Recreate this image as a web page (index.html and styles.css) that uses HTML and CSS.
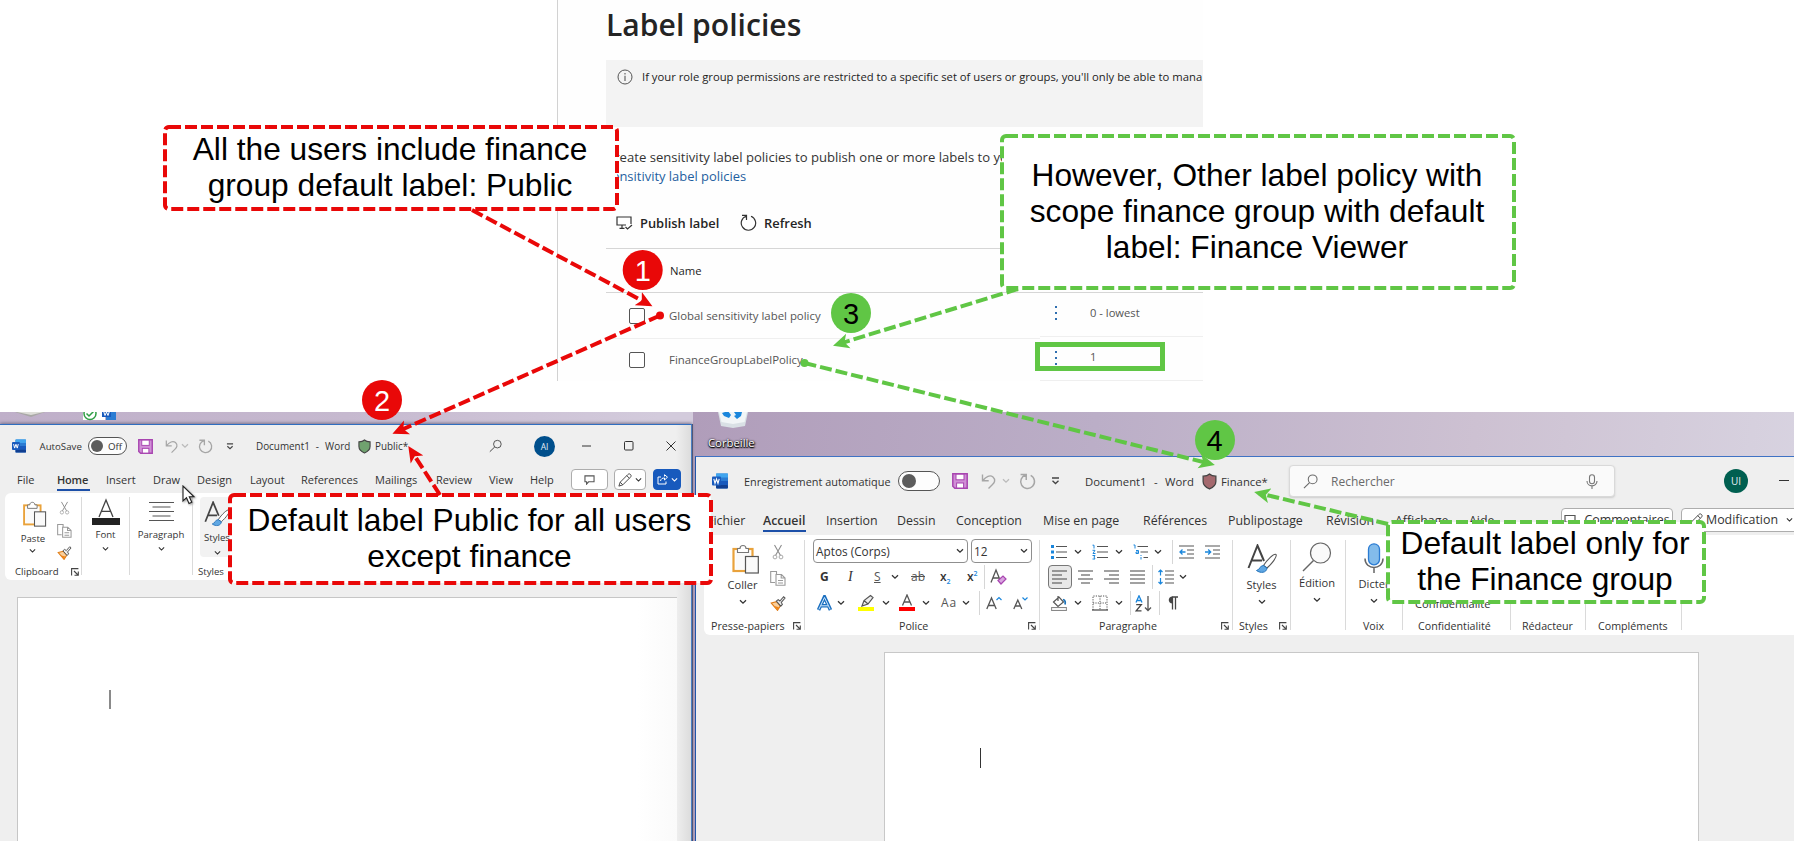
FILE: index.html
```html
<!DOCTYPE html>
<html lang="en">
<head>
<meta charset="utf-8">
<title>Label policies</title>
<link rel="stylesheet" href="styles.css">
</head>
<body>
<svg class="sprite" aria-hidden="true">
  <symbol id="chev" viewBox="0 0 8 6"><path d="M1 1.2 4 4.2 7 1.2" fill="none" stroke="currentColor" stroke-width="1.3"/></symbol>
  <symbol id="word" viewBox="0 0 16 16"><rect x="4" y="0.5" width="12" height="15" rx="1" fill="#2b7cd3"/><rect x="4" y="0.5" width="12" height="4" fill="#41a5ee"/><rect x="4" y="8" width="12" height="4" fill="#185abd"/><rect x="4" y="12" width="12" height="3.5" rx="1" fill="#103f91"/><rect x="0" y="3.5" width="9" height="9" rx="1" fill="#185abd"/><path d="M1.8 5.8 3 10.4 4.5 6 6 10.4 7.2 5.8" fill="none" stroke="#fff" stroke-width="1.1"/></symbol>
  <symbol id="save" viewBox="0 0 16 16"><path d="M.8.8h14.4v14.4H2.8L.8 13.2z" fill="#d08fd6" stroke="#a845b0" stroke-width="1.5"/><rect x="4" y="1.2" width="8" height="5.6" fill="#fff" stroke="#a845b0"/><rect x="4.6" y="10" width="7" height="5" fill="#fff" stroke="#a845b0"/></symbol>
  <symbol id="undo" viewBox="0 0 16 16"><path d="M1.5 1v6.2h6.2M1.8 7C5 3 9 1 12 3.5c3 2.8 1.500 5.500-.5 7.500L7.500 15" fill="none" stroke="#a6a6a6" stroke-width="1.4"/></symbol>
  <symbol id="redo" viewBox="0 0 16 16"><path d="M1.500 1.300H6.800V6.600M6.500 1.800A6.500 6.500 0 1 0 11 2.300" fill="none" stroke="#a6a6a6" stroke-width="1.4"/></symbol>
  <symbol id="more" viewBox="0 0 9 8"><path d="M1 1h7M1.500 3.700 4.500 6.500 7.500 3.700" fill="none" stroke="#444" stroke-width="1.300"/></symbol>
  <symbol id="shield" viewBox="0 0 14 16"><path d="M7 1C5.500 2.500 3.500 3 1 3v5c0 3.500 2.500 5.500 6 7 3.500-1.500 6-3.500 6-7V3C10.500 3 8.500 2.500 7 1z" fill="currentColor" stroke="#444" stroke-width="1.200"/></symbol>
  <symbol id="search" viewBox="0 0 16 16"><circle cx="10.300" cy="5.700" r="4.700" fill="none" stroke="currentColor" stroke-width="1.100"/><path d="M7 9.200 1 15" stroke="currentColor" stroke-width="1.200"/></symbol>
  <symbol id="scissors" viewBox="0 0 12 16"><path d="M2.500 1 8.500 11.500M9.500 1 3.500 11.500" stroke="#8c8c8c" stroke-width="1.100"/><circle cx="3" cy="13" r="1.900" fill="none" stroke="#aaa"/><circle cx="9" cy="13" r="1.900" fill="none" stroke="#aaa"/></symbol>
  <symbol id="copy" viewBox="0 0 16 16"><path d="M5 12.500H.7V1.500H6.500V4M6 4.500h5.500l3.500 3.500v7.300H6zM11.200 4.800V8H15M8 10.500h5M8 13h5" fill="none" stroke="#9a9a9a" stroke-width="1.100"/></symbol>
  <symbol id="brush" viewBox="0 0 16 16"><path d="M.8 7.500 6.500 6l4 4.500L7.500 15.300z" fill="#f9cf9c" stroke="#e07b13" stroke-width="1.200"/><path d="M3 10.500 7.500 14.800 9 12z" fill="#f0861b"/><path d="M6.200 5.500 8.200 3.800 10 5.300 14 .8 15.500 2.200 11.500 6.800 12.700 9 11 10.800z" fill="#eee" stroke="#555" stroke-width="1.100"/></symbol>
  <symbol id="launch" viewBox="0 0 8 8"><path d="M.6 7.500V.6H7.400M3 3 7 7M7.300 3.500V7.300H3.500" fill="none" stroke="#444" stroke-width="1.100"/></symbol>
  <symbol id="paste" viewBox="0 0 27 30"><rect x="1.500" y="5" width="19" height="22" fill="none" stroke="#e9a23b" stroke-width="2.200"/><rect x="3.700" y="7" width="14.600" height="18" fill="#fafafa"/><path d="M5.500 8.500V4.500H8C8 .500 14 .500 14 4.500h2.500v4z" fill="#fff" stroke="#777" stroke-width="1.100"/><rect x="13.500" y="12.500" width="12.800" height="16.500" fill="#fafafa" stroke="#555" stroke-width="1.200"/></symbol>
  <symbol id="stylesico" viewBox="0 0 30 30"><path d="M1.500 24 10.500 1.500 17 17M4.500 16.500H15" fill="none" stroke="#444" stroke-width="2"/><path d="M29 10.500C27 9 20 16 16.500 21.500l3.500 2.500C25 19.500 30.500 12.500 29 10.500z" fill="#fff" stroke="#555" stroke-width="1.100"/><path d="M16.500 21.500c-4 0-3 4-7 5 4 3 10 2.500 10.500-2.500z" fill="#5fa7e3" stroke="#2372ba"/></symbol>
  <symbol id="mic" viewBox="0 0 20 30"><rect x="4.500" y=".8" width="11" height="21" rx="5.500" fill="#83bceb" stroke="#2b7cd3" stroke-width="1.300"/><path d="M1 15.500c0 12 18 12 18 0M10 25v5" fill="none" stroke="#666" stroke-width="1.500"/></symbol>
  <symbol id="bucket" viewBox="0 0 16 16"><path d="M2.500 7 8 2l4.500 5L7 11.500zM7 1v5" fill="none" stroke="#555" stroke-width="1.200"/><path d="M12 4.500c2.500.5 2.500 3 2 5" fill="none" stroke="#1b72b8" stroke-width="1.700"/><rect x=".6" y="12.500" width="14.800" height="3" fill="#f5f5f5" stroke="#888"/></symbol>
  <symbol id="pen" viewBox="0 0 16 16"><path d="M1 15 2.500 10.500 11 2c1-1 2-1.500 3.300-.3C15.500 3 15 4 14 5L5.500 13.500zM10 3l3 3M2.500 10.500l3 3" fill="none" stroke="#444" stroke-width="1.100"/></symbol>
  <symbol id="comment" viewBox="0 0 12 11"><path d="M1 1h10v6.500H5L2.800 10V7.500H1z" fill="none" stroke="#555" stroke-width="1.200"/></symbol>
</svg>

<main class="canvas">

  <section class="admin">
    <h1>Label policies</h1>
    <div class="notice">
      <svg width="16" height="16" viewBox="0 0 16 16"><circle cx="8" cy="8" r="7" fill="none" stroke="#555"/><path d="M8 6.800V12M8 4v1.500" stroke="#555" stroke-width="1.100"/></svg>
      <span>If your role group permissions are restricted to a specific set of users or groups, you'll only be able to mana</span>
    </div>
    <p class="intro">Create sensitivity label policies to publish one or more labels to your<br><a>sensitivity label policies</a></p>
    <div class="commands">
      <svg width="17" height="14" viewBox="0 0 17 14"><path d="M10 9H1V1h14v7M6 9v3M3.500 12.300H8.500M9.500 11l2 2 4.500-4" fill="none" stroke="#333" stroke-width="1.200"/></svg>
      <span>Publish label</span>
      <svg width="18" height="18" viewBox="0 0 18 18"><path d="M3 1.300H7.500V6M7.200 2.200A7.200 7.200 0 1 0 12 2.300" fill="none" stroke="#333" stroke-width="1.200"/></svg>
      <span>Refresh</span>
    </div>
    <div class="thead"><span>Name</span></div>
    <div class="tbody">
      <div class="names">
        <div class="row"><i class="check"></i><span>Global sensitivity label policy</span></div>
        <div class="row last"><i class="check"></i><span>FinanceGroupLabelPolicy</span></div>
      </div>
      <div class="order">
        <div class="row"><i class="dots"></i><span>0 - lowest</span></div>
        <div class="row"><i class="dots"></i><span>1</span></div>
      </div>
    </div>
  </section>

  <div class="desk desk-left">
    <svg width="130" height="12" viewBox="0 0 130 12"><path d="M15 0 31 5 45 0z" fill="#a9a8a6"/><path d="M17 0H44L31 3z" fill="#deded9"/><rect x="83" y="0" width="22" height="8" fill="#fff"/><circle cx="90" cy="1.500" r="6" fill="#fff" stroke="#2f9e44" stroke-width="1.500"/><path d="M86.500 1.500 89 4 93.500-.5" fill="none" stroke="#2f9e44" stroke-width="1.500"/><rect x="106" y="0" width="10" height="8" fill="#2b7cd3"/><rect x="102" y="0" width="9" height="5" fill="#185abd"/><path d="M103.500-1 105 3.500 106.500 0 108 3.500 109.500-1" fill="none" stroke="#fff"/></svg>
  </div>
  <div class="desk desk-right">
    <svg width="32" height="16" viewBox="0 0 32 16"><path d="M1 0H31L28 14 16 16 4 14z" fill="#d9e0e5"/><path d="M2 0H30L27.500 10 16 12 4.500 10z" fill="#f1f5f7"/><path d="M5 1 11-1l3 4-2 3-5-2zM17 0h8l-1 4-4 3-3-3 2-1z" fill="#1a86dc"/></svg>
    <span>Corbeille</span>
  </div>

  <section class="win win1">
    <header class="title">
      <svg width="14" height="14"><use href="#word"/></svg>
      <span>AutoSave</span>
      <span class="toggle"><i></i>Off</span>
      <svg width="15" height="15"><use href="#save"/></svg>
      <svg width="14" height="15"><use href="#undo"/></svg>
      <svg class="dim" width="8" height="6"><use href="#chev"/></svg>
      <svg width="15" height="15"><use href="#redo"/></svg>
      <svg width="8" height="7"><use href="#more"/></svg>
      <span class="doc">Document1 - Word</span>
      <svg class="green" width="13" height="15"><use href="#shield"/></svg>
      <span class="tag">Public*</span>
      <svg class="ink" width="13" height="14"><use href="#search"/></svg>
      <b class="avatar">AI</b>
      <svg width="10" height="10" viewBox="0 0 10 10"><path d="M0 5h9" stroke="#333"/></svg>
      <svg width="10" height="10" viewBox="0 0 10 10"><rect x=".5" y=".5" width="8.500" height="8.500" rx="1" fill="none" stroke="#333"/></svg>
      <svg width="10" height="10" viewBox="0 0 10 10"><path d="M.5.5l9 9M9.500.5l-9 9" stroke="#333"/></svg>
    </header>
    <nav class="tabs">
      <span>File</span><span class="on">Home</span><span>Insert</span><span>Draw</span><span>Design</span><span>Layout</span><span>References</span><span>Mailings</span><span>Review</span><span>View</span><span>Help</span>
      <span class="btn"><svg width="11" height="10"><use href="#comment"/></svg></span>
      <span class="btn"><svg width="14" height="14"><use href="#pen"/></svg><svg width="7" height="6"><use href="#chev"/></svg></span>
      <span class="btn share"><svg width="11" height="11" viewBox="0 0 11 11"><path d="M4 3H1v7h8V7.500M3.500 7C4 4.500 5.500 4 7.500 4V6L10.500 3.200 7.500.7V2.500" fill="none" stroke="#fff"/></svg><svg width="7" height="6"><use href="#chev"/></svg></span>
    </nav>
    <div class="ribbon">
      <div class="group g-clip">
        <div class="body">
          <div class="big"><svg width="25" height="26"><use href="#paste"/></svg><span>Paste</span><svg width="7" height="6"><use href="#chev"/></svg></div>
          <div class="small"><svg width="11" height="14"><use href="#scissors"/></svg><svg width="15" height="15"><use href="#copy"/></svg><svg width="15" height="14"><use href="#brush"/></svg></div>
        </div>
        <div class="label"><span>Clipboard</span><svg width="8" height="8"><use href="#launch"/></svg></div>
      </div>
      <div class="group g-font">
        <div class="big"><svg width="28" height="27" viewBox="0 0 28 27"><path d="M7 19 14 2 21 19M9.500 13.300h9" fill="none" stroke="#444" stroke-width="1.300"/><rect x="0" y="20" width="28" height="7" fill="#222"/></svg><span>Font</span><svg width="7" height="6"><use href="#chev"/></svg></div>
      </div>
      <div class="group g-para">
        <div class="big"><svg width="25" height="27" viewBox="0 0 25 27"><path d="M0 4.500h25M3.500 9h18M0 13.500h25M3.500 18h18M0 22.500h25" stroke="#555" stroke-width="1.100"/></svg><span>Paragraph</span><svg width="7" height="6"><use href="#chev"/></svg></div>
      </div>
      <div class="group g-styles">
        <div class="big"><svg width="26" height="26"><use href="#stylesico"/></svg><span>Styles</span><svg width="7" height="6"><use href="#chev"/></svg></div>
        <div class="label"><span>Styles</span></div>
      </div>
    </div>
    <div class="paper"><i></i></div>
  </section>

  <section class="win win2">
    <header class="title">
      <svg width="16" height="16"><use href="#word"/></svg>
      <span>Enregistrement automatique</span>
      <span class="toggle"><i></i></span>
      <svg width="16" height="16"><use href="#save"/></svg>
      <svg width="16" height="17"><use href="#undo"/></svg>
      <svg class="dim" width="8" height="6"><use href="#chev"/></svg>
      <svg width="17" height="17"><use href="#redo"/></svg>
      <svg width="9" height="8"><use href="#more"/></svg>
      <span class="doc">Document1 - Word</span>
      <svg class="maroon" width="15" height="17"><use href="#shield"/></svg>
      <span class="tag">Finance*</span>
      <div class="find"><svg width="15" height="15"><use href="#search"/></svg><span>Rechercher</span><svg width="12" height="15" viewBox="0 0 12 15"><rect x="3.500" y=".7" width="5" height="9" rx="2.500" fill="none" stroke="#777" stroke-width="1.100"/><path d="M1 7c0 6.500 10 6.500 10 0M6 12v3" fill="none" stroke="#777" stroke-width="1.100"/></svg></div>
      <b class="avatar">UI</b>
      <svg width="10" height="10" viewBox="0 0 10 10"><path d="M0 4.500h10" stroke="#333"/></svg>
    </header>
    <nav class="tabs">
      <span>Fichier</span><span class="on">Accueil</span><span>Insertion</span><span>Dessin</span><span>Conception</span><span>Mise en page</span><span>Références</span><span>Publipostage</span><span>Révision</span><span>Affichage</span><span>Aide</span>
      <span class="btn"><svg width="12" height="12"><use href="#comment"/></svg>Commentaires</span>
      <span class="btn edit"><svg width="14" height="16"><use href="#pen"/></svg>Modification<svg width="7" height="6"><use href="#chev"/></svg></span>
    </nav>
    <div class="ribbon">
      <div class="group g-clip">
        <div class="body">
          <div class="big"><svg width="27" height="30"><use href="#paste"/></svg><span>Coller</span><svg width="8" height="6"><use href="#chev"/></svg></div>
          <div class="small"><svg width="12" height="16"><use href="#scissors"/></svg><svg width="16" height="16"><use href="#copy"/></svg><svg width="16" height="15"><use href="#brush"/></svg></div>
        </div>
        <div class="label"><span>Presse-papiers</span><svg width="8" height="8"><use href="#launch"/></svg></div>
      </div>
      <div class="group g-font">
        <div class="body tools">
          <div class="r1"><span class="combo">Aptos (Corps)<svg width="8" height="6"><use href="#chev"/></svg></span><span class="combo">12<svg width="8" height="6"><use href="#chev"/></svg></span></div>
          <div class="r2"><b>G</b><em>I</em><u>S</u><svg width="8" height="6"><use href="#chev"/></svg><s>ab</s><span class="bold">x<sub>2</sub></span><span class="bold">x<sup>2</sup></span><i class="sep"></i><svg width="17" height="18" viewBox="0 0 17 18"><path d="M1 14.500 6 2l4 10M3 10h6" fill="none" stroke="#555" stroke-width="1.300"/><path d="M8 12.500 13 8l3 3-5 5z" fill="#d9a5e0" stroke="#a845b0" stroke-width="1.200"/></svg></div>
          <div class="r3"><svg width="15" height="16" viewBox="0 0 15 16"><path d="M1.500 15 7.500 2 13.500 15M4 10.800h7" fill="none" stroke="#1a6fc0" stroke-width="3.600"/><path d="M1.800 14.500 7.500 2.500 13.200 14.500M4 10.800h7" fill="none" stroke="#d4e8fa" stroke-width="1"/></svg><svg width="8" height="6"><use href="#chev"/></svg><svg width="17" height="18" viewBox="0 0 17 18"><path d="M4 12 6 6.500 12.500 1.500l2.500 2L10 10z M6 6.500l4 3.500" fill="#eee" stroke="#555" stroke-width="1.200"/><rect x="0" y="13" width="16" height="4" fill="#ff0"/></svg><svg width="8" height="6"><use href="#chev"/></svg><svg width="17" height="18" viewBox="0 0 17 18"><path d="M3.500 11.500 8 1l4.500 10.500M5.200 8h5.600" fill="none" stroke="#555" stroke-width="1.300"/><rect x="0" y="13" width="16" height="4" fill="#f00"/></svg><svg width="8" height="6"><use href="#chev"/></svg><span class="aa">Aa</span><svg width="8" height="6"><use href="#chev"/></svg><i class="sep"></i><svg width="16" height="16" viewBox="0 0 16 16"><path d="M.8 14 5.500 3l4.700 11M2.500 10.500h6" fill="none" stroke="#555" stroke-width="1.300"/><path d="M10.500 5 13 2.500 15.500 5" fill="none" stroke="#1a86dc" stroke-width="1.200"/></svg><svg width="16" height="16" viewBox="0 0 16 16"><path d="M.8 14 4.800 5l4 9M2.500 11h5" fill="none" stroke="#555" stroke-width="1.300"/><path d="M9.500 2.500 12 5l2.500-2.500" fill="none" stroke="#1a86dc" stroke-width="1.200"/></svg></div>
        </div>
        <div class="label"><span>Police</span><svg width="8" height="8"><use href="#launch"/></svg></div>
      </div>
      <div class="group g-para">
        <div class="body tools">
          <div class="r1"><svg width="16" height="16" viewBox="0 0 16 16"><path d="M5 2.500h11M5 8h11M5 13.500h11" stroke="#555" stroke-width="1.200"/><path d="M0 2.500h3M0 8h3M0 13.500h3" stroke="#1a86dc" stroke-width="3"/></svg><svg width="8" height="6"><use href="#chev"/></svg><svg width="16" height="16" viewBox="0 0 16 16"><path d="M5 2.500h11M5 8h11M5 13.500h11" stroke="#555" stroke-width="1.200"/><path d="M.5 1.200H2V4.500M.5 6.300H3L1 9.500h2.500M.5 11.500H3L2 13l1 2H.5" fill="none" stroke="#1a86dc"/></svg><svg width="8" height="6"><use href="#chev"/></svg><svg width="16" height="16" viewBox="0 0 16 16"><path d="M4.500 2.500H15M7.500 8H15M10.500 13.500H15" stroke="#555" stroke-width="1.200"/><path d="M.5 1H2V4.500M3 6.500h2.500v3H3v-1.500h2.500M8 11v1M8 13v2.500" fill="none" stroke="#1a86dc"/></svg><svg width="8" height="6"><use href="#chev"/></svg><i class="sep"></i><svg width="15" height="16" viewBox="0 0 15 16"><path d="M0 2h15M8 6h7M8 10h7M0 14h15" stroke="#555" stroke-width="1.200"/><path d="M6.500 8H1M3.500 5.500 1 8l2.500 2.500" fill="none" stroke="#1a86dc" stroke-width="1.300"/></svg><svg width="15" height="16" viewBox="0 0 15 16"><path d="M0 2h15M8 6h7M8 10h7M0 14h15" stroke="#555" stroke-width="1.200"/><path d="M0 8h5.500M3.200 5.500 5.700 8 3.200 10.500" fill="none" stroke="#1a86dc" stroke-width="1.300"/></svg></div>
          <div class="r2"><span class="pressed"><svg width="15" height="14" viewBox="0 0 15 14"><path d="M0 1h15M0 5h10M0 9h15M0 13h10" stroke="#444" stroke-width="1.200"/></svg></span><svg width="15" height="14" viewBox="0 0 15 14"><path d="M0 1h15M3 5h9M0 9h15M3 13h9" stroke="#444" stroke-width="1.200"/></svg><svg width="15" height="14" viewBox="0 0 15 14"><path d="M0 1h15M5 5h10M0 9h15M5 13h10" stroke="#444" stroke-width="1.200"/></svg><svg width="15" height="14" viewBox="0 0 15 14"><path d="M0 1h15M0 5h15M0 9h15M0 13h15" stroke="#444" stroke-width="1.200"/></svg><i class="sep"></i><svg width="16" height="16" viewBox="0 0 16 16"><path d="M7 2h9M7 6h9M7 10h9M7 14h9" stroke="#555" stroke-width="1.200"/><path d="M2.500 1v5.500M.5 3l2-2 2 2M2.500 15V9M.5 13l2 2 2-2" fill="none" stroke="#1a86dc" stroke-width="1.200"/></svg><svg width="8" height="6"><use href="#chev"/></svg></div>
          <div class="r3"><svg width="16" height="16"><use href="#bucket"/></svg><svg width="8" height="6"><use href="#chev"/></svg><svg width="16" height="16" viewBox="0 0 16 16"><path d="M1 15V1h14v14M8 1v14M1 8h14" fill="none" stroke="#555" stroke-dasharray="1.200 1.200"/><path d="M0 15h16" stroke="#444" stroke-width="1.200"/></svg><svg width="8" height="6"><use href="#chev"/></svg><i class="sep"></i><svg width="17" height="17" viewBox="0 0 17 17"><path d="M1 7.500 4 .8 7 7.500M2 5.500h4" fill="none" stroke="#1a86dc" stroke-width="1.300"/><path d="M1.200 9.700H6.300L1.200 15.800H6.500" fill="none" stroke="#444" stroke-width="1.300"/><path d="M13 1v14.500M10 12.500l3 3 3-3" fill="none" stroke="#555" stroke-width="1.300"/></svg><i class="sep"></i><svg width="10" height="14" viewBox="0 0 10 14"><path d="M4.500 13.500V1H10M7.500 13.500V1" fill="none" stroke="#444" stroke-width="1.300"/><path d="M4.500.5C-.5.5-.5 7.500 4.500 7.500z" fill="#444"/></svg></div>
        </div>
        <div class="label"><span>Paragraphe</span><svg width="8" height="8"><use href="#launch"/></svg></div>
      </div>
      <div class="group g-styles">
        <div class="big body"><svg width="30" height="30"><use href="#stylesico"/></svg><span>Styles</span><svg width="8" height="6"><use href="#chev"/></svg></div>
        <div class="label"><span>Styles</span><svg width="8" height="8"><use href="#launch"/></svg></div>
      </div>
      <div class="group g-edit">
        <div class="big body"><svg width="30" height="30" viewBox="0 0 30 30"><circle cx="18.500" cy="11" r="10" fill="#fafafa" stroke="#666" stroke-width="1.200"/><path d="M11.500 18.500 1 29" stroke="#666" stroke-width="1.500"/></svg><span>Édition</span><svg width="8" height="6"><use href="#chev"/></svg></div>
      </div>
      <div class="group g-mic">
        <div class="big body"><svg width="20" height="30"><use href="#mic"/></svg><span>Dicter</span><svg width="8" height="6"><use href="#chev"/></svg></div>
        <div class="label"><span>Voix</span></div>
      </div>
      <div class="group g-conf"><div class="body low"><span>Confidentialité</span></div><div class="label"><span>Confidentialité</span></div></div>
      <div class="group g-red"><div class="body"></div><div class="label"><span>Rédacteur</span></div></div>
      <div class="group g-comp"><div class="body"></div><div class="label"><span>Compléments</span></div></div>
    </div>
    <div class="paper"><i></i></div>
  </section>

  <div class="highlight"></div>

  <svg class="pointer" width="14" height="20" viewBox="0 0 14 20"><path d="M1 1v15l3.500-3.300L7 18.500l2.800-1.200L7.300 11.800H12z" fill="#fff" stroke="#222" stroke-width="1.100"/></svg>

  <div class="callout c1"><svg><rect x="2" y="2" width="452" height="82" rx="4"/></svg><p>All the users include finance<br>group default label: Public</p></div>
  <div class="callout c2"><svg><rect x="2" y="2" width="481" height="88" rx="4"/></svg><p>Default label Public for all users<br>except finance</p></div>
  <div class="callout c3"><svg><rect x="2" y="2" width="512" height="152" rx="4"/></svg><p>However, Other label policy with<br>scope finance group with default<br>label: Finance Viewer</p></div>
  <div class="callout c4"><svg><rect x="2" y="2" width="316" height="80" rx="4"/></svg><p>Default label only for<br>the Finance group</p></div>

  <svg class="arrows" width="1794" height="841" viewBox="0 0 1794 841">
    <defs>
      <marker id="tipr" viewBox="-16 -8 17 16" refX="-5" refY="0" markerWidth="17" markerHeight="16" markerUnits="userSpaceOnUse" orient="auto"><path d="M0 0-16-7.500-12 0-16 7.500z" fill="#e90808"/></marker>
      <marker id="tipg" viewBox="-16 -8 17 16" refX="-5" refY="0" markerWidth="17" markerHeight="16" markerUnits="userSpaceOnUse" orient="auto"><path d="M0 0-16-7.500-12 0-16 7.500z" fill="#60c645"/></marker>
    </defs>
    <g class="red">
      <path d="M472 210 648 303.800" marker-end="url(#tipr)"/>
      <path d="M660 315.500 397 431.800" marker-end="url(#tipr)"/>
      <path d="M440 495 411 450.300" marker-end="url(#tipr)"/>
    </g>
    <g class="grn">
      <path d="M1018 289 837.800 344.200" marker-end="url(#tipg)"/>
      <path d="M804.500 363 1210 463.700" marker-end="url(#tipg)"/>
      <path d="M1388 524 1259 493.200" marker-end="url(#tipg)"/>
    </g>
    <circle cx="660" cy="315.500" r="4" fill="#e90808"/>
    <circle cx="804.500" cy="363" r="4" fill="#60c645"/>
    <circle cx="642.700" cy="270" r="20" fill="#e90808"/><text class="lt" x="642.700" y="280.500">1</text>
    <circle cx="382" cy="400" r="20" fill="#e90808"/><text class="lt" x="382" y="410.500">2</text>
    <circle cx="851" cy="313" r="20" fill="#60c645"/><text x="851" y="323.500">3</text>
    <circle cx="1215" cy="440" r="20" fill="#60c645"/><text x="1214.500" y="450.500">4</text>
  </svg>
</main>
</body>
</html>
```

FILE: styles.css
```css
* { box-sizing: border-box; }
body { margin: 0; background: #fff; font-family: "Open Sans", "Noto Sans", sans-serif; color: #333; }
h1, p { margin: 0; }
svg { display: block; flex: none; }
.sprite { position: absolute; width: 0; height: 0; }
.canvas { position: relative; width: 1794px; height: 841px; overflow: hidden; background: #fff; white-space: nowrap; }

/* Policy list */
.admin { position: absolute; left: 557px; top: 0; width: 646px; height: 381px; border-left: 1px solid #d2d2d2; padding-left: 48px; background: #fefefe; overflow: hidden; }
.admin h1 { height: 60px; line-height: 49px; font-size: 30.1px; font-weight: 600; color: #242424; }
.notice { display: flex; gap: 9px; height: 67px; padding: 9px 0 0 11px; background: #f3f3f3; font-size: 11.28px; line-height: 16px; color: #1c1c1c; }
.intro { padding-top: 21px; font-size: 13.1px; line-height: 19px; color: #333; }
.intro a { color: #1f5f9f; font-size: 12.95px; }
.commands { display: grid; grid-template-columns: 24px 99px 25px auto; align-items: center; height: 44px; margin-top: 19px; padding: 0 0 7px 10px; font-size: 12.9px; font-weight: 600; color: #242424; line-height: 20px; border-bottom: 1px solid #d6d6d6; }
.thead { height: 44px; padding: 13px 0 0 64px; border-bottom: 1px solid #d6d6d6; font-size: 11.3px; line-height: 18px; font-weight: 500; color: #242424; }
.tbody { display: flex; }
.names { width: 434px; border-top: 0; }
.order { width: 163px; }
.row { display: flex; align-items: center; border-bottom: 1px solid #efefef; height: 44px; font-size: 11.4px; color: #555; }
.row span { padding-bottom: 2px; }
.names .row { height: 46px; padding: 1px 0 0 23px; gap: 24px; }
.names .row.last { height: 42px; padding-top: 0; border-bottom: 0; }
.order .row { padding: 0 0 3px 15px; gap: 33px; font-size: 11.2px; }
.order .row + .row { padding-bottom: 2px; }
.check { width: 16px; height: 16px; border: 1px solid #555; border-radius: 2px; background: #fff; }
.dots { width: 2px; height: 2px; background: #2f6fb0; box-shadow: 0 6px #2f6fb0, 0 -6px #2f6fb0; }
.highlight { position: absolute; left: 1035px; top: 342px; width: 130px; height: 29px; border: 5px solid #60c645; }

/* Desktops */
.desk-left { position: absolute; left: 0; top: 412px; width: 694px; height: 430px; background: linear-gradient(90deg, #bfafc9, #c6b9cf 50%, #d3cbdc 95%); }
.desk-right { position: absolute; left: 693px; top: 412px; width: 1101px; height: 430px; padding-left: 15px; background: linear-gradient(97deg, #b09dba, #bbaec7 35%, #cdc1d2 68%, #d9d5e2); }
.desk-right svg { margin-left: 9px; }
.desk-right span { font-size: 11.3px; line-height: 30px; color: #fff; text-shadow: 0 0 2px #000, 1px 1px 2px #000, 0 1px 1px #000; }

/* Word windows */
.win { position: absolute; background: #efefef; }
.win1 { left: 0; top: 424px; width: 692px; height: 417px; border-top: 1px solid #2f6ec0; border-right: 1px solid #4b7fc4; box-shadow: 0 -1px 3px #77718a, 1px 0 0 #3c4768; background: linear-gradient(90deg, #efefef 676px, #dcdcdc 691px); }
.win2 { left: 695px; top: 456px; width: 1099px; height: 385px; border-top: 1px solid #3f72c4; border-left: 1px solid #1f55aa; }
.title, .tabs { display: grid; align-items: center; }
.dim { color: #bbb; }
.ink { color: #444; }
.green { color: #70a26f; }
.maroon { color: #a4696e; }
.toggle { display: flex; align-items: center; gap: 7px; border: 1px solid #555; border-radius: 12px; background: #fdfdfd; }
.toggle i { border-radius: 50%; background: #5c5c5c; }
.avatar { display: grid; place-items: center; border-radius: 50%; font-weight: 400; color: #e6eef5; }
.tabs .on { position: relative; font-weight: 600; }
.tabs .on::after { content: ""; position: absolute; left: 0; bottom: 0; height: 2px; background: #1c4fa8; }
.btn { display: flex; align-items: center; justify-content: center; gap: 4px; background: #fff; border: 1px solid #adadad; border-radius: 4px; }
.ribbon { display: flex; background: #fff; }
.group { display: flex; flex-direction: column; flex: none; border-right: 1px solid #dadada; }
.group .body { display: flex; flex: none; }
.big, .big.body { display: flex; flex-direction: column; align-items: center; }
.small { display: flex; flex-direction: column; }
.label { display: flex; flex: none; }
.label svg { margin-left: auto; }

.win1 .title { height: 42px; padding-left: 12px; grid-template-columns: 27.5px 48.5px 50px 27px 16px 17px 28px 30px 102px 17px 114px 45px 48px 42px 42px auto; font-size: 9.7px; }
.win1 .title .doc, .win1 .title .tag { font-size: 9.9px; }
.win1 .title .doc { word-spacing: 3.5px; }
.win1 .toggle { width: 39px; height: 18px; padding-left: 2px; gap: 5px; }
.win1 .toggle i { width: 12px; height: 12px; }
.win1 .avatar { width: 21px; height: 21px; background: #004f8c; font-size: 8.5px; }
.win1 .tabs { height: 26px; padding-left: 17px; grid-template-columns: 40px 49px 47px 44px 53px 51px 74px 61px 53px 41px 41px 43px 39px 28px; font-size: 11px; line-height: 26px; }
.win1 .on { letter-spacing: -0.2px; }
.win1 .on::after { width: 33px; bottom: 2px; }
.win1 .btn { width: 37px; height: 21px; margin-top: -1px; }
.win1 .btn + .btn { width: 32px; gap: 3px; }
.win1 .btn.share { width: 28px; background: #185abd; border-color: #185abd; color: #fff; }
.win1 .ribbon { height: 87px; margin: 0 4px 0 5px; padding: 4px 0 5px; border-radius: 6px; font-size: 9.6px; }
.win1 .group { height: 78px; }
.win1 .g-clip { width: 77px; }
.win1 .g-clip .body { height: 68px; }
.win1 .g-clip .big { width: 52px; padding: 4px 0 0 7px; }
.win1 .big > span { line-height: 20px; }
.win1 .big > svg:last-child { margin-top: 1px; }
.win1 .g-clip .big > span { line-height: 23px; margin-right: 3px; }
.win1 .g-clip .big > svg:last-child { margin: -2px 5px 0 0; }
.win1 .small { padding-top: 4px; gap: 8px; }
.win1 .small svg:first-child { margin-left: 2px; }
.win1 .label { line-height: 12px; padding: 1px 2px 0 10px; align-items: center; }
.win1 .g-font { width: 48px; padding-top: 1px; }
.win1 .g-para { width: 63px; padding-top: 1px; }
.win1 .g-styles { width: 60px; border: 0; }
.win1 .g-styles .big { width: 34px; height: 60px; margin: 0 0 8px 7px; padding-top: 4px; background: #f2f2f2; border-radius: 4px; flex: none; }
.win1 .g-styles .big > span { line-height: 22px; }
.win1 .g-styles .label { padding-left: 5px; }
.win1 .paper { width: 660px; height: 250px; margin: 17px 0 0 17px; padding: 92px 0 0 91px; border: solid #c6c6c6; border-width: 1px 0 0 1px; background: linear-gradient(90deg, #fff 94%, #fafafa); }
.paper i { display: block; width: 2px; height: 19px; background: #8a8a8a; }

.win2 .title { height: 48px; padding-left: 16px; grid-template-columns: 32px 154px 54px 29px 21px 17px 32px 34px 117px 19px 68px 435px 55px auto; font-size: 10.9px; }
.win2 .title .doc, .win2 .title .tag { font-size: 11.3px; line-height: 16px; padding-top: 1px; }
.win2 .title .doc { word-spacing: 4.5px; }
.win2 .toggle { width: 42px; height: 20px; padding-left: 3px; }
.win2 .toggle i { width: 14px; height: 14px; }
.find { display: grid; grid-template-columns: 28px 257px auto; align-items: center; width: 326px; height: 32px; padding-left: 13px; background: #fafafa; border: 1px solid #d9d9d9; border-radius: 4px; box-shadow: 0 1px 2px #ccc; font-size: 12px; color: #6a6a6a; }
.find svg:last-child { margin-left: -2px; }
.win2 .avatar { width: 24px; height: 24px; background: #005f50; font-size: 10px; }
.win2 .tabs { height: 30px; padding-left: 11px; grid-template-columns: 56px 63px 71px 59px 87px 100px 85px 98px 69px 74px 92px 120px auto; font-size: 12.4px; line-height: 32px; }
.win2 .tabs > span { height: 30px; }
.win2 .on::after { width: 43px; bottom: 3px; }
.win2 .tabs > .btn { width: 112px; height: 24px; gap: 8px; line-height: 20px; }
.win2 .tabs > .btn.edit { width: 122px; gap: 3px; padding-left: 7px; justify-content: flex-start; }
.win2 .btn.edit svg:last-child { margin-left: 5px; }
.win2 .ribbon { height: 100px; margin-left: 8px; padding: 5px 0; border-radius: 6px 0 0 6px; font-size: 11.1px; }
.win2 .group { height: 90px; }
.win2 .body { height: 79px; }
.win2 .big { padding-top: 4px; }
.win2 .big > span { line-height: 22px; }
.win2 .big > svg:last-child { margin-top: 3px; }
.win2 .label { font-size: 10.7px; line-height: 12px; padding-top: 1px; align-items: center; }
.win2 .label svg { margin-top: 0; }
.win2 .g-clip { width: 101px; }
.win2 .g-clip .big { width: 66px; padding-left: 16px; }
.win2 .g-clip .big > span, .win2 .g-clip .big > svg:last-child { margin-right: 5px; }
.win2 .small { padding-top: 4px; gap: 10px; }
.win2 .small svg:first-child { margin-left: 2px; }
.win2 .g-clip .label { padding: 1px 3px 0 7px; }
.win2 .g-font { width: 235px; }
.win2 .g-font .label { padding: 1px 3px 0 94px; }
.win2 .g-font .tools + .label, .win2 .g-para .tools + .label { margin-top: 0; }
.win2 .g-para { width: 193px; }
.win2 .g-para .label { padding: 1px 3px 0 59px; }
.win2 .g-styles { width: 58px; }
.win2 .g-styles .body { padding-top: 4px; }
.win2 .g-styles .label { padding: 1px 3px 0 6px; }
.win2 .g-edit { width: 55px; }
.win2 .g-edit .body { padding-top: 2px; padding-right: 2px; }
.win2 .g-mic { width: 57px; }
.win2 .g-mic .body { padding-top: 3px; }
.win2 .g-mic .label { padding-left: 17px; }
.win2 .g-conf { width: 108px; }
.win2 .g-conf .label { padding-left: 15px; }
.win2 .g-conf .low { align-items: flex-end; padding: 0 0 8px 12px; }
.win2 .g-red { width: 75px; }
.win2 .g-red .label { padding-left: 11px; }
.win2 .g-comp { width: 96px; }
.win2 .g-comp .label { padding-left: 12px; }
.win2 .tools { display: grid; grid-template-rows: 25px 26px 26px; align-items: center; margin-top: -1px; height: 80px; }
.r1, .r2, .r3 { display: grid; align-items: center; line-height: 20px; }
.g-font .r1 { grid-template-columns: 158px 60px; padding-left: 8px; align-self: start; }
.g-font .r2 { grid-template-columns: 28px 26px 18px 19px 29px 27px 17px 7px auto; padding-left: 15px; font-size: 12px; }
.g-font .r3 { grid-template-columns: 20px 21px 24px 17px 23px 18px 22px 16px 8px 27px auto; padding-left: 13px; font-size: 12px; }
.g-para .r1 { grid-template-columns: 23px 18px 23px 18px 21px 17px 8px 26px auto; padding-left: 12px; }
.g-para .r2 { grid-template-columns: 31px 26px 26px 21px 7px 21px auto; padding-left: 8px; }
.g-para .r3 { grid-template-columns: 23px 18px 23px 14px 6px 23px 10px auto; padding-left: 12px; }
.r1 svg, .r2 svg, .r3 svg { position: relative; left: -1px; }
.combo { display: flex; align-items: center; justify-content: space-between; height: 24px; width: 155px; padding: 0 2px; border: 1px solid #8f8f8f; border-radius: 4px; font-size: 11.8px; }
.combo + .combo { width: 61px; }
.r2 em { font-family: "Liberation Serif", serif; font-size: 14px; }
.r2 s, .r2 u { color: #555; }
.bold { font-weight: 600; }
.bold sub, .bold sup { font-size: 7px; line-height: 0; color: #1a86dc; }
.aa { letter-spacing: 1px; color: #555; }
.sep { width: 1px; height: 24px; background: #d6d6d6; }
.pressed { display: grid; place-items: center; width: 24px; height: 24px; border: 1px solid #777; border-radius: 4px; background: #e8e8e8; }
.win2 .paper { width: 815px; height: 220px; margin: 17px 0 0 188px; padding: 95px 0 0 95px; border: 1px solid #c8c8c8; background: #fff; }
.win2 .paper i { width: 1px; height: 20px; background: #333; }

/* Annotations */
.pointer { position: absolute; left: 182px; top: 485px; filter: drop-shadow(1px 1px 1px #999); }
.callout { position: absolute; display: flex; flex-direction: column; align-items: center; font: 31.7px/36px "Liberation Sans", Arial, sans-serif; color: #000; text-align: center; }
.callout svg { position: absolute; left: 0; top: 0; width: 100%; height: 100%; }
.callout rect { fill: #fff; stroke: #e90808; stroke-width: 4; stroke-dasharray: 12 4; }
.callout p { position: relative; }
.c1 { left: 163px; top: 125px; width: 456px; height: 86px; padding-top: 6px; }
.c2 { left: 228px; top: 493px; width: 485px; height: 92px; padding-top: 9px; }
.c3 { left: 1000px; top: 134px; width: 516px; height: 156px; padding-top: 23px; }
.c4 { left: 1386px; top: 520px; width: 320px; height: 84px; padding-top: 5px; }
.c1 p, .c2 p, .c3 p, .c4 p { left: -1px; }
.c3 rect, .c4 rect { stroke: #60c645; }
.arrows { position: absolute; left: 0; top: 0; }
.arrows path { fill: none; }
.arrows marker path { fill: #e90808; stroke: none; }
.arrows #tipg path { fill: #60c645; }
.red path, .grn path { stroke-width: 4; stroke-dasharray: 12 4; }
.red > path { stroke: #e90808; }
.grn > path { stroke: #60c645; }
.arrows text { font: 29px "Liberation Sans", Arial, sans-serif; text-anchor: middle; }
.arrows .lt { fill: #fff; }
```
